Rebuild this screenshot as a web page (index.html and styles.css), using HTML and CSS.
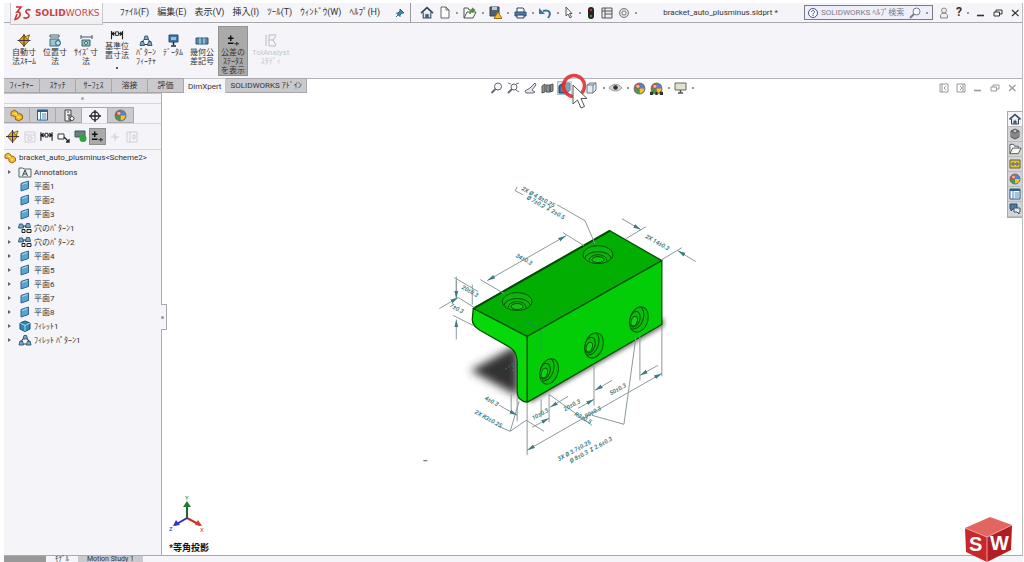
FILE: index.html
```
<!DOCTYPE html>
<html lang="ja">
<head>
  <meta charset="UTF-8">
  <title>bracket_auto_plusminus.sldprt - SOLIDWORKS</title>
  <meta name="viewport" content="width=device-width,initial-scale=1.0">
  <link rel="stylesheet" href="styles.css">
</head>
<body>
  <!-- shared icons -->
  <svg class="sprite" aria-hidden="true">
    <symbol id="i-plane" viewBox="0 0 12 12"><path d="M2 3.5L9.500 1v7.500L2 11z" fill="#5ba3d0" stroke="#2c6790"/><path d="M3 4.500l5.500-2" stroke="#b5ddf3"/></symbol>
    <symbol id="i-part" viewBox="0 0 12 12"><path d="M1 3l3-2 3 2v2l2-1 2.500 2v3L8 11 5 9.500V7L1 6z" fill="#f4bd2e" stroke="#a46d0b"/><path d="M4 4l3 1M7 7l2 1" stroke="#fff1a8"/></symbol>
    <symbol id="i-pattern" viewBox="0 0 14 12"><path d="M5 5l1-3.500h2.500l1 3.500zM1 11l1-4h2.500l1 4zM8.500 11l1-4H12l1 4z" fill="#79aac6" stroke="#315e7c"/><path d="M5 5L3 7.500M9.500 5l1.500 2.500M5.500 10h3" stroke="#333"/></symbol>
    <symbol id="i-holes" viewBox="0 0 14 12"><path d="M.5 6l1-4h3l1 4zM7.500 5.500l1-4h3l1 4z" fill="#79aac6" stroke="#315e7c"/><path d="M5 4h3M4 7.500h3v3H4zM9 7.500h4v3H9z" fill="#dceaf2" stroke="#222"/></symbol>
    <symbol id="i-fillet" viewBox="0 0 12 12"><path d="M1 3l5-2 5 2v6l-5 2.500L1 9z" fill="#2f89b6" stroke="#174d6c"/><path d="M1 3l5 2.500L11 3M6 5.500V11" fill="none" stroke="#a9d8ee"/></symbol>
    <symbol id="i-target" viewBox="0 0 14 14"><circle cx="7" cy="7" r="4" fill="none" stroke="#333" stroke-width="1.300"/><path d="M7 1v12M1 7h12" stroke="#222" stroke-width="1.300"/></symbol>
    <symbol id="i-auto" viewBox="0 0 14 14"><path d="M7 1l5.500 6L7 13 1.500 7z" fill="#e9a12c" stroke="#6c4610"/><path d="M7 0v14M0 7h14" stroke="#333"/><path d="M8 3l5-2-2 5z" fill="#f7d264" stroke="#8a5a0a"/></symbol>
    <symbol id="i-plusminus" viewBox="0 0 14 14"><path d="M1 4.500h6M4 1.500v6M1 10h6" stroke="#111" stroke-width="1.600"/><path d="M8 10.500h5M10.500 8.500v4" stroke="#333" stroke-width="1.300"/></symbol>
    <symbol id="i-datum" viewBox="0 0 14 12"><path d="M1 1v9M13 1v9M1 4h12M4 2L1 4l3 2M10 2l3 2-3 2" fill="none" stroke="#222" stroke-width="1.200"/><path d="M5.500 2h3v4h-3z" fill="#fff" stroke="#222"/></symbol>
    <symbol id="i-ball" viewBox="0 0 12 12"><circle cx="6" cy="6" r="5" fill="#d64333"/><path d="M6 6V1a5 5 0 0 1 5 5z" fill="#4b84d8"/><path d="M6 6h5a5 5 0 0 1-5 5z" fill="#f3c62f"/><path d="M6 6v5a5 5 0 0 1-5-5z" fill="#39a04a"/><circle cx="6" cy="6" r="5" fill="none" stroke="#777"/><circle cx="4.500" cy="4" r="1.500" fill="#fff" opacity=".6"/></symbol>
    <symbol id="i-list" viewBox="0 0 12 12"><path d="M1 1h10v10H1z" fill="#fff" stroke="#2b5f8d"/><path d="M1 2h10" stroke="#2b5f8d" stroke-width="2"/><path d="M4 3v8M5.500 5H10M5.500 7H10M5.500 9H10" stroke="#4c87b5"/></symbol>
    <symbol id="i-home" viewBox="0 0 12 12"><path d="M2.500 6v5h7V6" fill="#dbe8f0" stroke="#33475a"/><path d="M.5 6.500L6 1.500l5.500 5" fill="none" stroke="#33475a" stroke-width="1.600"/><path d="M5 11V8h2v3" fill="#678" stroke="#33475a"/></symbol>
    <symbol id="i-open" viewBox="0 0 14 12"><path d="M1 11V1h4l1 2h4v2M1 11l3-6h9l-3 6z" fill="#f8fbf2" stroke="#4d5556"/></symbol>
    <symbol id="i-min" viewBox="0 0 10 10"><path d="M1 7.500h7" stroke="currentColor" stroke-width="1.600"/></symbol>
    <symbol id="i-restore" viewBox="0 0 10 10"><path d="M1 4h5.500v4H1zM3 4V2h6v4H6.500" fill="none" stroke="currentColor"/></symbol>
    <symbol id="i-close" viewBox="0 0 10 10"><path d="M2 2l6.500 6M8.500 2L2 8" stroke="currentColor" stroke-width="1.200"/></symbol>
    <symbol id="i-mag" viewBox="0 0 12 12"><circle cx="7.500" cy="4.500" r="3.500" fill="#f4f9fc" stroke="currentColor"/><path d="M5 7L1 11" stroke="currentColor" stroke-width="1.800"/></symbol>
  </svg>

  <div class="app">
    <header class="titlebar">
      <div class="logo">
        <svg width="18" height="15" viewBox="0 0 18 15"><path d="M2 1h5L3 6c5-1 4 6-2 7.500L3 8M16.500 4c-3-1-5 0-4.500 2s3.500 1.500 3 4-4 2.500-5.500 1.500" fill="none" stroke="#c93238" stroke-width="1.600"/></svg>
        <span class="logo-text"><b>SOLID</b>WORKS</span>
      </div>
      <nav class="menu">
        <a href="#">ﾌｧｲﾙ(F)</a>
        <a href="#">編集(E)</a>
        <a href="#">表示(V)</a>
        <a href="#">挿入(I)</a>
        <a href="#">ﾂｰﾙ(T)</a>
        <a href="#">ｳｨﾝﾄﾞｳ(W)</a>
        <a href="#">ﾍﾙﾌﾟ(H)</a>
      </nav>
      <button class="icon-btn pin" aria-label="ピン"><svg width="10" height="10" viewBox="0 0 10 10"><path d="M1 9l3-3M5 1l4 4-2 0-2 2v1.500L1.500 5H3l2-2z" fill="#3b87b4" stroke="#28658c"/></svg></button>
      <div class="quick">
        <button class="icon-btn" aria-label="ホーム"><svg width="14" height="13"><use href="#i-home"/></svg></button>
        <button class="icon-btn drop" aria-label="新規"><svg width="12" height="13" viewBox="0 0 12 13"><path d="M2 1h5l3 3v8H2zM7 1v3h3" fill="#fff" stroke="#666"/></svg></button>
        <button class="icon-btn drop" aria-label="開く"><svg width="14" height="12" viewBox="0 0 14 12"><use href="#i-open"/><path d="M7 7c0-3 1-4 4-4M9 1l2.500 2L9 5" fill="none" stroke="#4d8a2e" stroke-width="1.300"/></svg></button>
        <button class="icon-btn drop" aria-label="保存"><svg width="13" height="13" viewBox="0 0 13 13"><path d="M1 1h9v9H1z" fill="#50606e" stroke="#34404a"/><path d="M3 1h5v3H3z" fill="#bcd"/><path d="M9 6l4 6.500H5z" fill="#f2bd30" stroke="#9a6d0e"/></svg></button>
        <button class="icon-btn drop" aria-label="印刷"><svg width="13" height="12" viewBox="0 0 13 12"><path d="M3 5V1h6l1 1v3" fill="#fff" stroke="#345"/><path d="M1 5h11v4H1z" fill="#4a7fae" stroke="#2b4d70"/><path d="M3 8h7v3H3z" fill="#eef" stroke="#345"/></svg></button>
        <button class="icon-btn drop" aria-label="元に戻す"><svg width="13" height="12" viewBox="0 0 13 12"><path d="M4 4c6-2 9 2 5 7" fill="none" stroke="#39769f" stroke-width="2"/><path d="M0 1v6h6z" fill="#39769f"/></svg></button>
        <button class="icon-btn drop" aria-label="選択"><svg width="10" height="13" viewBox="0 0 10 13"><path d="M2 1v9l2-2 2 4 1.500-1-2-3.500H8z" fill="#fff" stroke="#555"/></svg></button>
        <button class="icon-btn" aria-label="再構築"><svg width="10" height="14" viewBox="0 0 10 14"><rect x="2" y="1" width="6" height="12" rx="3" fill="#222"/><circle cx="5" cy="4" r="1.300" fill="#b33"/><circle cx="5" cy="10" r="1.300" fill="#484"/></svg></button>
        <button class="icon-btn" aria-label="プロパティ"><svg width="12" height="12" viewBox="0 0 12 12"><path d="M1 1h10v10H1zM4 1v10M1 4h10M4 7h7" fill="#eee" stroke="#555"/></svg></button>
        <button class="icon-btn drop" aria-label="オプション"><svg width="12" height="12" viewBox="0 0 12 12"><circle cx="6" cy="6" r="4.500" fill="#ddd" stroke="#777"/><circle cx="6" cy="6" r="2" fill="#fff" stroke="#777"/></svg></button>
      </div>
      <h1 class="doc-title">bracket_auto_plusminus.sldprt *</h1>
      <form class="search">
        <svg width="12" height="12" viewBox="0 0 12 12"><circle cx="6" cy="6" r="4.500" fill="#fff" stroke="#44528a"/><path d="M4.500 5c0-2 3-2 3 0 0 1-1.500 1-1.500 2.500M6 8v1" fill="none" stroke="#44528a"/></svg>
        <input type="text" aria-label="ヘルプ検索" placeholder="SOLIDWORKS ﾍﾙﾌﾟ検索">
        <button class="icon-btn drop" type="button" aria-label="検索"><svg width="12" height="12"><use href="#i-mag"/></svg></button>
      </form>
      <div class="win-main">
        <button class="icon-btn" aria-label="ログイン"><svg width="10" height="12" viewBox="0 0 10 12"><circle cx="5" cy="3.500" r="2.500" fill="#eee" stroke="#888"/><path d="M1.500 11V8.500c0-3 7-3 7 0V11z" fill="#eee" stroke="#888"/></svg></button>
        <button class="help drop">?</button>
        <button class="icon-btn" aria-label="最小化"><svg width="10" height="10"><use href="#i-min"/></svg></button>
        <button class="icon-btn" aria-label="元に戻す"><svg width="10" height="10"><use href="#i-restore"/></svg></button>
        <button class="icon-btn" aria-label="閉じる"><svg width="10" height="10"><use href="#i-close"/></svg></button>
      </div>
    </header>

    <div class="ribbon">
      <button class="tool"><svg width="14" height="13"><use href="#i-auto"/></svg>自動寸<br>法ｽｷｰﾑ</button>
      <button class="tool"><svg width="13" height="13" viewBox="0 0 13 13"><path d="M1 1h9v2H1z" fill="#fff" stroke="#456"/><path d="M1 5h9v7H1z" fill="#9fc3d2" stroke="#3c6b80"/><circle cx="9" cy="9" r="3" fill="#3d7f9d"/><path d="M9 7v4M7 9h4" stroke="#fff"/></svg>位置寸<br>法</button>
      <button class="tool"><svg width="13" height="13" viewBox="0 0 13 13"><path d="M1 3h11M1 1v4M12 1v4" stroke="#3c5663"/><path d="M2 6h8v6H2z" fill="#8fc0bd" stroke="#35686d"/><circle cx="6" cy="9" r="1.500" fill="#fff" stroke="#35686d"/></svg>ｻｲｽﾞ寸<br>法</button>
      <button class="tool raised"><svg width="14" height="11"><use href="#i-datum"/></svg>基準位<br>置寸法<span class="more"></span></button>
      <button class="tool"><svg width="14" height="13"><use href="#i-pattern"/></svg>ﾊﾟﾀｰﾝ<br>ﾌｨｰﾁｬ</button>
      <button class="tool"><svg width="13" height="13" viewBox="0 0 13 13"><path d="M2 1h9v7H2z" fill="#3c78a8" stroke="#294b68"/><path d="M4 3h5v3H4z" fill="#8fc1e4"/><path d="M6.500 8v3M4 12h5" stroke="#223" stroke-width="1.500"/></svg>ﾃﾞｰﾀﾑ</button>
      <button class="tool"><svg width="14" height="13" viewBox="0 0 14 13"><path d="M1 4h12v6H1z" fill="#5789ab" stroke="#2e536f"/><path d="M5 4v6M9 4v6" stroke="#c8deed"/></svg>幾何公<br>差記号</button>
      <button class="tool pressed" aria-pressed="true"><svg width="13" height="13"><use href="#i-plusminus"/></svg>公差の<br>ｽﾃｰﾀｽ<br>を表示</button>
      <button class="tool" disabled><svg width="12" height="13" viewBox="0 0 12 13"><path d="M1 1v11M11 1H4v11h7M4 6h4l3-4M8 6l3 5" fill="none" stroke="#bbb"/></svg>TolAnalyst<br>ｽﾀﾃﾞｨ</button>
    </div>

    <div class="tab-row">
      <nav class="tabs">
        <button>ﾌｨｰﾁｬｰ</button>
        <button>ｽｹｯﾁ</button>
        <button>ｻｰﾌｪｽ</button>
        <button>溶接</button>
        <button>評価</button>
        <button class="active">DimXpert</button>
        <button>SOLIDWORKS ｱﾄﾞｲﾝ</button>
      </nav>
      <div class="hud">
        <button class="icon-btn" aria-label="全体表示"><svg width="13" height="12"><use href="#i-mag"/></svg></button>
        <button class="icon-btn" aria-label="一部拡大"><svg width="13" height="12" viewBox="0 0 13 12"><path d="M1 1l3 1M12 1L9 2M12 10L9 8" stroke="#777"/><circle cx="7" cy="5" r="3" fill="#f4f9fc" stroke="#667"/><path d="M5 7l-4 4" stroke="#667" stroke-width="1.800"/></svg></button>
        <button class="icon-btn" aria-label="前の表示"><svg width="13" height="12" viewBox="0 0 13 12"><path d="M1 9l5-3 5-5 1 2-4 5 3 2-2 1-7 0z" fill="#e4e9ec" stroke="#667"/></svg></button>
        <button class="icon-btn" aria-label="断面表示"><svg width="13" height="12" viewBox="0 0 13 12"><path d="M1 4l3-2v8l-3 1zM5 3h4v7H5zM9 3l3-1v7L9 10z" fill="#8b9296" stroke="#555"/></svg></button>
        <button class="icon-btn on" aria-label="表示方向"><svg width="13" height="12" viewBox="0 0 13 12"><path d="M1 4l4-3h7v7l-3 3H1z" fill="#3b6f92" stroke="#2b3d4b"/><path d="M3 5h5v5H3z" fill="#c56"/></svg></button>
        <button class="icon-btn drop style-btn" aria-label="表示スタイル">
          <svg width="13" height="12" viewBox="0 0 13 12"><path d="M2 3l3-2h6v7l-3 3H2zM2 3h6v8M8 3l3-2" fill="#e4edf3" stroke="#6a7a88"/></svg>
        </button>
        <button class="icon-btn drop" aria-label="表示／非表示"><svg width="13" height="10" viewBox="0 0 13 10"><path d="M0 5c4-5 9-5 13 0-4 4-9 4-13 0z" fill="#d5d8d8" stroke="#999"/><circle cx="6.500" cy="4.500" r="2.300" fill="#333"/></svg></button>
        <button class="icon-btn" aria-label="外観"><svg width="13" height="13"><use href="#i-ball"/></svg></button>
        <button class="icon-btn drop" aria-label="シーン"><svg width="13" height="13" viewBox="0 0 12 12"><use href="#i-ball"/><path d="M0 9h3v3H0zM5 9h2v3H5zM9 9h3v3H9z" fill="#333"/></svg></button>
        <button class="icon-btn drop" aria-label="表示設定"><svg width="13" height="12" viewBox="0 0 13 12"><path d="M1 1h11v7H1z" fill="#dfe4cf" stroke="#666"/><path d="M6.500 8v3M4 11h5" stroke="#555" stroke-width="1.500"/></svg></button>
        <!-- click ring and mouse pointer -->
        <svg class="pointer" width="32" height="38" viewBox="0 0 32 38"><circle cx="14" cy="13" r="10.500" fill="#fff" fill-opacity=".4" stroke="#e03030" stroke-width="3.500" opacity=".9"/><path d="M13 12v19l4.500-4 3.500 8 3.500-1.500-3.500-8h6z" fill="#fff" stroke="#555"/></svg>
      </div>
      <div class="win-doc">
        <button class="icon-btn" aria-label="左ペイン"><svg width="10" height="10" viewBox="0 0 10 10"><path d="M1 1h8v8H1zM3 1v8M7 3L5 5l2 2" fill="none" stroke="currentColor"/></svg></button>
        <button class="icon-btn" aria-label="右ペイン"><svg width="10" height="10" viewBox="0 0 10 10"><path d="M1 1h8v8H1zM7 1v8M4 3l2 2-2 2" fill="none" stroke="currentColor"/></svg></button>
        <button class="icon-btn" aria-label="最小化"><svg width="10" height="10"><use href="#i-min"/></svg></button>
        <button class="icon-btn" aria-label="元に戻す"><svg width="10" height="10"><use href="#i-restore"/></svg></button>
        <button class="icon-btn" aria-label="閉じる"><svg width="10" height="10"><use href="#i-close"/></svg></button>
      </div>
    </div>

    <main class="work">
      <aside class="side">
        <div class="grip"></div>
        <div class="side-tabs">
          <button aria-label="FeatureManager"><svg width="13" height="13"><use href="#i-part"/></svg></button>
          <button aria-label="PropertyManager"><svg width="13" height="12"><use href="#i-list"/></svg></button>
          <button aria-label="ConfigurationManager"><svg width="12" height="13" viewBox="0 0 12 13"><path d="M2 1h6v11H2zM4 3h2M4 6h4M6 6v5h4" fill="#eee" stroke="#444"/><circle cx="9" cy="9.500" r="2" fill="#fff" stroke="#444"/></svg></button>
          <button class="active" aria-label="DimXpertManager"><svg width="14" height="14"><use href="#i-target"/></svg></button>
          <button aria-label="DisplayManager"><svg width="13" height="13"><use href="#i-ball"/></svg></button>
        </div>
        <div class="side-tools">
          <button class="icon-btn" aria-label="自動寸法"><svg width="13" height="13"><use href="#i-auto"/></svg></button>
          <button class="icon-btn" aria-label="コピー" disabled><svg width="12" height="12" viewBox="0 0 12 12"><path d="M1 1h10v10H1zM1 4h10M4 6h4v3H4z" fill="none" stroke="#999"/></svg></button>
          <button class="icon-btn" aria-label="基準位置寸法"><svg width="13" height="12"><use href="#i-datum"/></svg></button>
          <button class="icon-btn" aria-label="サイズ寸法"><svg width="13" height="12" viewBox="0 0 13 12"><path d="M1 3h6v5H1z" fill="#fff" stroke="#333"/><path d="M7 6l5 5M12 8v3H9" fill="none" stroke="#222" stroke-width="1.300"/></svg></button>
          <button class="icon-btn" aria-label="表示"><svg width="13" height="13" viewBox="0 0 13 13"><path d="M1 1h10v6H1z" fill="#5f8a76" stroke="#456"/><circle cx="9" cy="8.500" r="3.500" fill="#2da738"/></svg></button>
          <button class="icon-btn on" aria-label="公差のステータスを表示"><svg width="13" height="13"><use href="#i-plusminus"/></svg></button>
          <button class="icon-btn" aria-label="追加" disabled><svg width="12" height="12" viewBox="0 0 12 12"><path d="M2 6h8M6 2v8M4 4l4 4" stroke="#999"/></svg></button>
          <button class="icon-btn" aria-label="TolAnalyst" disabled><svg width="12" height="12" viewBox="0 0 12 12"><path d="M1 1h10v10H1zM4 1v10M7 4h2v4H7z" fill="none" stroke="#999"/></svg></button>
        </div>
        <div class="tree-root"><svg width="12" height="12"><use href="#i-part"/></svg>bracket_auto_plusminus&lt;Scheme2&gt;</div>
        <ul class="tree">
          <li class="has-child"><svg width="14" height="12" viewBox="0 0 14 12"><path d="M1 2h4l1 1h7v8H1z" fill="#eef3f4" stroke="#566"/><path d="M4.500 10L7 4l2.500 6M5.500 8h3" fill="none" stroke="#345"/></svg>Annotations</li>
          <li><svg width="12" height="12"><use href="#i-plane"/></svg>平面1</li>
          <li><svg width="12" height="12"><use href="#i-plane"/></svg>平面2</li>
          <li><svg width="12" height="12"><use href="#i-plane"/></svg>平面3</li>
          <li class="has-child"><svg width="14" height="12"><use href="#i-holes"/></svg>穴のﾊﾟﾀｰﾝ1</li>
          <li class="has-child"><svg width="14" height="12"><use href="#i-holes"/></svg>穴のﾊﾟﾀｰﾝ2</li>
          <li class="has-child"><svg width="12" height="12"><use href="#i-plane"/></svg>平面4</li>
          <li class="has-child"><svg width="12" height="12"><use href="#i-plane"/></svg>平面5</li>
          <li class="has-child"><svg width="12" height="12"><use href="#i-plane"/></svg>平面6</li>
          <li class="has-child"><svg width="12" height="12"><use href="#i-plane"/></svg>平面7</li>
          <li class="has-child"><svg width="12" height="12"><use href="#i-plane"/></svg>平面8</li>
          <li class="has-child"><svg width="12" height="12"><use href="#i-fillet"/></svg>ﾌｨﾚｯﾄ1</li>
          <li class="has-child"><svg width="14" height="12"><use href="#i-pattern"/></svg>ﾌｨﾚｯﾄ ﾊﾟﾀｰﾝ1</li>
        </ul>
        <button class="side-handle" aria-label="パネルを閉じる"></button>
      </aside>

      <section class="viewport">
        <svg class="model" viewBox="162 93 860 463">
          <defs>
            <filter id="soft" x="-30%" y="-30%" width="160%" height="160%"><feGaussianBlur stdDeviation="4"/></filter>
            <filter id="edge" x="-30%" y="-30%" width="160%" height="160%"><feGaussianBlur stdDeviation="2"/></filter>
            <clipPath id="hole"><ellipse rx="9" ry="13" transform="rotate(18)"/></clipPath>
            <marker id="tip" viewBox="0 0 8 6" refX="8" refY="3" markerWidth="8" markerHeight="6" orient="auto-start-reverse"><path d="M0 1l8 2-8 2z" fill="#3d7c80"/></marker>
            <g id="bore-top">
              <ellipse rx="15" ry="9" fill="#0bb50b" stroke="#045204"/>
              <path d="M-13 4a13 7 0 0 1 26 0M-9 6a9 6 0 0 1 18 0" fill="none" stroke="#045204"/>
              <ellipse cy="5" rx="6" ry="3" fill="#13c413" stroke="#045204"/>
            </g>
            <g id="bore-side">
              <ellipse rx="9" ry="13" transform="rotate(18)" fill="#07bf07" stroke="#045204"/>
              <g clip-path="url(#hole)" fill="none" stroke="#045204">
                <ellipse cx="-4" cy="-1" rx="8" ry="12" transform="rotate(18)"/>
                <ellipse cx="-4" cy="1" rx="5" ry="8" transform="rotate(18)"/>
                <ellipse cx="-4" cy="3" rx="3" ry="5" transform="rotate(18)" fill="#13d413"/>
              </g>
            </g>
          </defs>
          <path d="M470 371l48-26v52z" fill="#333" filter="url(#soft)"/>
          <path d="M530 404l134-77v-9l-136 74z" fill="#777" filter="url(#edge)"/>

          <!-- bracket body -->
          <g stroke="#064d06" stroke-width="1.300" stroke-linejoin="round">
            <path d="M473 309l137-78 52 30-135 76z" fill="#03ae03"/>
            <path d="M527 337l135-76v64l-135 78z" fill="#03cd06"/>
            <path d="M473 309l54 28v66c-6-1-10-4-10-10v-30c0-8-2-12-7-15l-30-17c-5-3-8-6-8-11z" fill="#06d80a"/>
            <path d="M473 309l137-78" stroke-width="2"/>
          </g>
          <use href="#bore-top" x="598" y="255"/>
          <use href="#bore-top" x="517" y="302"/>
          <use href="#bore-side" x="549" y="372"/>
          <use href="#bore-side" x="594" y="346"/>
          <use href="#bore-side" x="639" y="320"/>
          <path d="M494 299l8 9M527 322l8 5M541 330v22M541 372v10M505 370l8-6v10" fill="none" stroke="#2c86a0" stroke-dasharray="2 2"/>

          <!-- extension lines and leaders -->
          <path class="dim" d="M557 205l28 16 10 23M563 233l21 13M480 280l24 14M646 227l-20 12M662 260l20-12M456 277v22M454 278l24 14M458 298l16 10M472 285v20M453 316l20 10M527 403v53M662 326v51M640 335v46M594 366v40M549 395v28M541 400v18M511 395v20M517 397v25M636 338l-12 87-32-9M549 395l43 31M498 427l12 5 9-30M510 432l16-11 18 11M517 187l-2 4 8 4"/>
          <!-- dimension lines -->
          <g class="dim">
            <path d="M487 281l79-45" marker-start="url(#tip)" marker-end="url(#tip)"/>
            <path d="M622 219l19 11" marker-end="url(#tip)"/>
            <path d="M696 262l-18-11" marker-end="url(#tip)"/>
            <path d="M439 309l19-11" marker-end="url(#tip)"/>
            <path d="M456 340v-20" marker-end="url(#tip)"/>
            <path d="M456 281v18" marker-end="url(#tip)"/>
            <path d="M527 451l135-77" marker-start="url(#tip)" marker-end="url(#tip)"/>
            <path d="M658 366l-18 10" marker-end="url(#tip)"/>
            <path d="M612 381l-17 10" marker-end="url(#tip)"/>
            <path d="M578 409l16-9" marker-end="url(#tip)"/>
            <path d="M568 397l-18 11" marker-end="url(#tip)"/>
            <path d="M532 428l17-9" marker-end="url(#tip)"/>
            <path d="M499 406l18 10" marker-end="url(#tip)"/>
          </g>
          <g class="dim-text">
            <text transform="translate(521 190) rotate(29)">2X Ø 4.8±0.25</text>
            <text transform="translate(526 199) rotate(29)">Ø 7±0.2 ↧ 2±0.5</text>
            <text transform="translate(515 257) rotate(29)">34±0.3</text>
            <text transform="translate(645 238) rotate(29)">2X 14±0.3</text>
            <text transform="translate(461 289) rotate(29)">20±0.3</text>
            <text transform="translate(449 307) rotate(29)">7±0.3</text>
            <text transform="translate(484 400) rotate(29)">4±0.3</text>
            <text transform="translate(474 414) rotate(29)">2X R3±0.25</text>
            <text transform="translate(533 421) rotate(-29)">10±0.3</text>
            <text transform="translate(565 412) rotate(-29)">20±0.3</text>
            <text transform="translate(611 396) rotate(-29)">50±0.3</text>
            <text transform="translate(586 419) rotate(-29)">90±0.3</text>
            <text transform="translate(574 416) rotate(29)">R3±0.5</text>
            <text transform="translate(559 462) rotate(-29)">3X Ø 3.7±0.25</text>
            <text transform="translate(571 464) rotate(-29)">Ø 8±0.3 ↧ 2.6±0.3</text>
          </g>
          <path d="M423 461.500h4" stroke="#555"/>
        </svg>

        <svg class="triad" width="40" height="40" viewBox="0 0 40 40">
          <g stroke-width="2"><path d="M20 24V9" stroke="#1c6a26"/><path d="M20 24l13 7" stroke="#c2342c"/><path d="M20 24L8 31" stroke="#2b2bb0"/></g>
          <path d="M20 7l4 6h-8z" fill="#1f7d2b"/><path d="M35 32l-7-1 3-5z" fill="#d43a31"/><path d="M6 32l3-6 4 5z" fill="#3434c8"/>
          <text x="18" y="6" fill="#1c6a26">Y</text><text x="33" y="38" fill="#d43a31">X</text><text x="2" y="37" fill="#3434c8">Z</text>
        </svg>
        <p class="view-name">*等角投影</p>

        <nav class="task-pane">
          <button aria-label="ホーム"><svg width="12" height="12"><use href="#i-home"/></svg></button>
          <button aria-label="デザインライブラリ"><svg width="12" height="12" viewBox="0 0 12 12"><path d="M2 3l4-2 4 2v6l-4 2-4-2zM2 3l4 2 4-2M6 5v6M4 2v8M8 2v8" fill="#bbb" stroke="#555"/></svg></button>
          <button aria-label="ファイルエクスプローラ"><svg width="13" height="12"><use href="#i-open"/></svg></button>
          <button aria-label="表示パレット"><svg width="12" height="12" viewBox="0 0 12 12"><path d="M1 2h10v8H1z" fill="#d9c44b" stroke="#6c611c"/><path d="M3 5h2v2H3zM7 5h2v2H7z" fill="#fff" stroke="#555"/></svg></button>
          <button aria-label="外観"><svg width="12" height="12"><use href="#i-ball"/></svg></button>
          <button aria-label="ユーザー定義プロパティ"><svg width="12" height="12"><use href="#i-list"/></svg></button>
          <button aria-label="フォーラム"><svg width="12" height="12" viewBox="0 0 12 12"><path d="M1 1h7v5H4L2 8V6H1z" fill="#4c7ca5" stroke="#2d4e6c"/><path d="M5 5h6v4h-1v2L8 9H5z" fill="#e6eef4" stroke="#456"/></svg></button>
        </nav>
      </section>
    </main>

    <footer class="bottom-tabs">
      <div class="scrollers"></div>
      <button class="active">ﾓﾃﾞﾙ</button>
      <button>Motion Study 1</button>
    </footer>

    <svg class="sw-cube" width="50" height="46" viewBox="0 0 50 46">
      <path d="M1 12L26 1l22 8-25 12z" fill="#e2655f"/>
      <path d="M1 12l22 9v25L2 36z" fill="#c8272b"/>
      <path d="M23 21L48 9l-1 25-24 12z" fill="#b01d22"/>
      <path d="M1 12l22 9L48 9M23 21v25" fill="none" stroke="#f0a09c"/>
      <text x="5" y="35">S</text>
      <text x="26" y="34">W</text>
    </svg>
  </div>
</body>
</html>
```

FILE: styles.css
```
* { box-sizing: border-box; }
html, body {
  margin: 0; padding: 0;
  height: 100%;
  background: #fff;
  font-family: Roboto, "Noto Sans CJK JP", sans-serif;
  font-size: 8px; line-height: 9px; color: #333;
  overflow: hidden;
}
button, input { font: inherit; color: inherit; }
button {
  border: 0; background: none; padding: 0; margin: 0;
  cursor: pointer; white-space: nowrap;
}
a { color: inherit; text-decoration: none; }
svg { display: block; flex: none; }
.sprite { position: absolute; width: 0; height: 0; }

.app {
  height: 100vh; padding: 3px 1px 0 4px;
  display: flex; flex-direction: column;
  position: relative;
}
.icon-btn {
  display: flex; align-items: center; justify-content: center;
  flex: none;
}
.drop::after {
  content: ""; width: 2px; height: 2px; margin-left: 5px;
  background: #777; border-radius: 50%;
}

/* Title bar */
.titlebar {
  display: flex; align-items: center; flex: none;
  height: 20px; background: #f5f4f9;
  border-bottom: 1px solid #a9a9ad; border-right: 1px solid #bbb;
}
.logo {
  display: flex; align-items: center; gap: 3px;
  width: 93px; height: 22px; margin: 0 17px 0 6px; padding-left: 3px;
  align-self: flex-start; flex: none; z-index: 1;
  background: linear-gradient(#fff, #eeeef1);
  border: 1px solid #c8c8cc; border-top: 0;
}
.logo-text {
  color: #cb4247; font-size: 9px;
  font-family: "DejaVu Sans", sans-serif;
}
.menu { display: flex; gap: 8px; font-size: 9px; white-space: nowrap; }
.pin { margin: 0 5px 0 15px; }
.quick {
  display: flex; align-items: center; gap: 5px; height: 19px;
  padding-left: 9px; border-left: 1px solid #999;
}
.doc-title {
  flex: 1; margin: 0; text-align: center;
  font-size: 8px; font-weight: 400; white-space: nowrap;
}
.search {
  display: flex; align-items: center; gap: 2px;
  width: 129px; height: 15px; padding: 0 4px 0 2px;
  background: #eeeff9; border: 1px solid #777b85; flex: none;
}
.search input {
  flex: 1; min-width: 0; border: 0; padding: 0; background: none;
  outline: none; height: 11px;
}
.search input::placeholder { color: #7c7c8a; opacity: 1; }
.search .icon-btn { color: #778; }
.win-main {
  display: flex; align-items: center; gap: 7px;
  padding: 0 2px 0 6px; color: #333;
}
.help { display: flex; align-items: center; font-size: 12px; font-weight: 700; }

/* Ribbon */
.ribbon {
  display: flex; align-items: flex-start; gap: 7px; flex: none;
  height: 56px; padding: 3px 0 0 8px;
  background: #f5f4f9;
  border-bottom: 1px solid #b4b4b8; border-right: 1px solid #bbb;
}
.tool {
  display: flex; flex-direction: column; align-items: center;
  height: 50px; padding-top: 8px; text-align: center;
}
.tool svg { margin-bottom: 1px; }
.tool.raised { padding-top: 4px; }
.tool .more { width: 2px; height: 2px; margin-top: 7px; background: #555; }
.tool.pressed {
  width: 30px; margin: 0 -3px;
  background: #aaa; border: 1px solid #929292; padding-top: 7px;
}
.tool:disabled { color: #c6c6ca; }

/* Command tabs and view toolbar */
.tab-row {
  display: flex; align-items: flex-start; flex: none;
  height: 14px; border-right: 1px solid #bbb;
}
.tabs { display: flex; height: 15px; margin-top: -1px; flex: none; }
.tabs button {
  min-width: 36px; padding: 0 4px;
  background: #cacace; border: 1px solid #a6a6aa; border-left: 0;
}
.tabs .active { background: #f7f7fa; border-color: #c6c6ca; border-bottom: 0; }
.hud {
  display: flex; align-items: center; gap: 4px;
  height: 18px; margin-left: 18%; position: relative; z-index: 2;
  color: #667;
}
.hud .on { background: #cde3f2; outline: 1px solid #9bc2dd; }
.style-btn { margin-left: 10px; }
.pointer { position: absolute; left: 70px; top: -6px; pointer-events: none; }
.win-doc {
  display: flex; align-items: center; gap: 7px;
  height: 18px; margin-left: auto; padding-right: 5px; color: #999;
}

/* Work area */
.work { display: flex; flex: 1; min-height: 0; }
.side {
  width: 158px; flex: none; position: relative;
  background: #f5f4f9;
  border-top: 1px solid #c4c4c8; border-right: 1px solid #a9a9ad;
}
.grip {
  height: 10px; border-bottom: 1px solid #d5d5da;
  display: flex; align-items: center; justify-content: center;
}
.grip::before { content: ""; width: 3px; height: 3px; border-radius: 50%; background: #aaa; }
.side-tabs { display: flex; margin-top: 3px; height: 17px; border-bottom: 1px solid #d5d5da; }
.side-tabs button {
  width: 26px; display: flex; align-items: center; justify-content: center;
  background: #c9c9ce; border: 1px solid #a9a9ad; border-left: 0;
}
.side-tabs .active { background: #f5f4f9; border-bottom: 0; }
.side-tools {
  display: flex; align-items: center; height: 26px;
  border-bottom: 1px solid #d5d5da;
}
.side-tools .icon-btn { width: 17px; height: 17px; }
.side-tools .on { background: #aaa; border: 1px solid #8f8f8f; }
.side-tools :disabled { opacity: .4; }
.tree-root { display: flex; align-items: center; gap: 3px; height: 15px; white-space: nowrap; }
.tree { list-style: none; margin: 0; padding: 0; }
.tree li {
  display: flex; align-items: center; height: 14px; gap: 2px;
  padding-left: 14px; position: relative; white-space: nowrap;
}
.tree svg { width: 14px; }
.tree .has-child::before {
  content: ""; position: absolute; left: 4px; top: 5px;
  border: 2px solid transparent; border-left: 3px solid #666; border-right: 0;
}
.side-handle {
  position: absolute; right: -6px; top: 210px; z-index: 1;
  width: 6px; height: 26px;
  background: #f5f4f9; border: 1px solid #a9a9ad; border-left: 0;
}
.side-handle::before { content: ""; display: block; width: 3px; height: 3px; border-radius: 50%; background: #999; }

.viewport {
  flex: 1; min-width: 0; position: relative;
  background: #fff; border-right: 1px solid #bbb;
}
.model { width: 100%; height: 100%; }
.dim { fill: none; stroke: #8b9a9d; stroke-width: 1; }
.dim-text { font-size: 6px; font-style: italic; font-weight: 600; fill: #35777f; }
.triad { position: absolute; left: 5px; bottom: 21px; font-size: 6px; }
.view-name { position: absolute; left: 7px; bottom: 2px; margin: 0; font-size: 9px; font-weight: 700; color: #111; }
.task-pane {
  position: absolute; right: 0; top: 18px; width: 15px;
  border: 1px solid #aaa; border-right: 0; background: #d4d4d8;
}
.task-pane button {
  display: flex; align-items: center; justify-content: center;
  width: 100%; height: 15px; border-bottom: 1px solid #bbb;
}
.task-pane button:first-child { background: #f5f4f9; }

/* Motion study tabs, a thin strip along the bottom */
.bottom-tabs {
  display: flex; flex: none; height: 7px;
  font-size: 7px; line-height: 6px;
  background: #f5f4f9; border-top: 1px solid #a9a9ad;
}
.scrollers { width: 42px; background: #999; }
.bottom-tabs button { height: 6px; padding: 0 9px; background: #cacace; }
.bottom-tabs .active { background: #f5f4f9; }
.sw-cube { position: absolute; right: 10px; bottom: 0; }
.sw-cube text {
  fill: #fff; font-size: 20px; font-weight: 700;
  font-family: "Liberation Sans", Arial, sans-serif;
}
```
